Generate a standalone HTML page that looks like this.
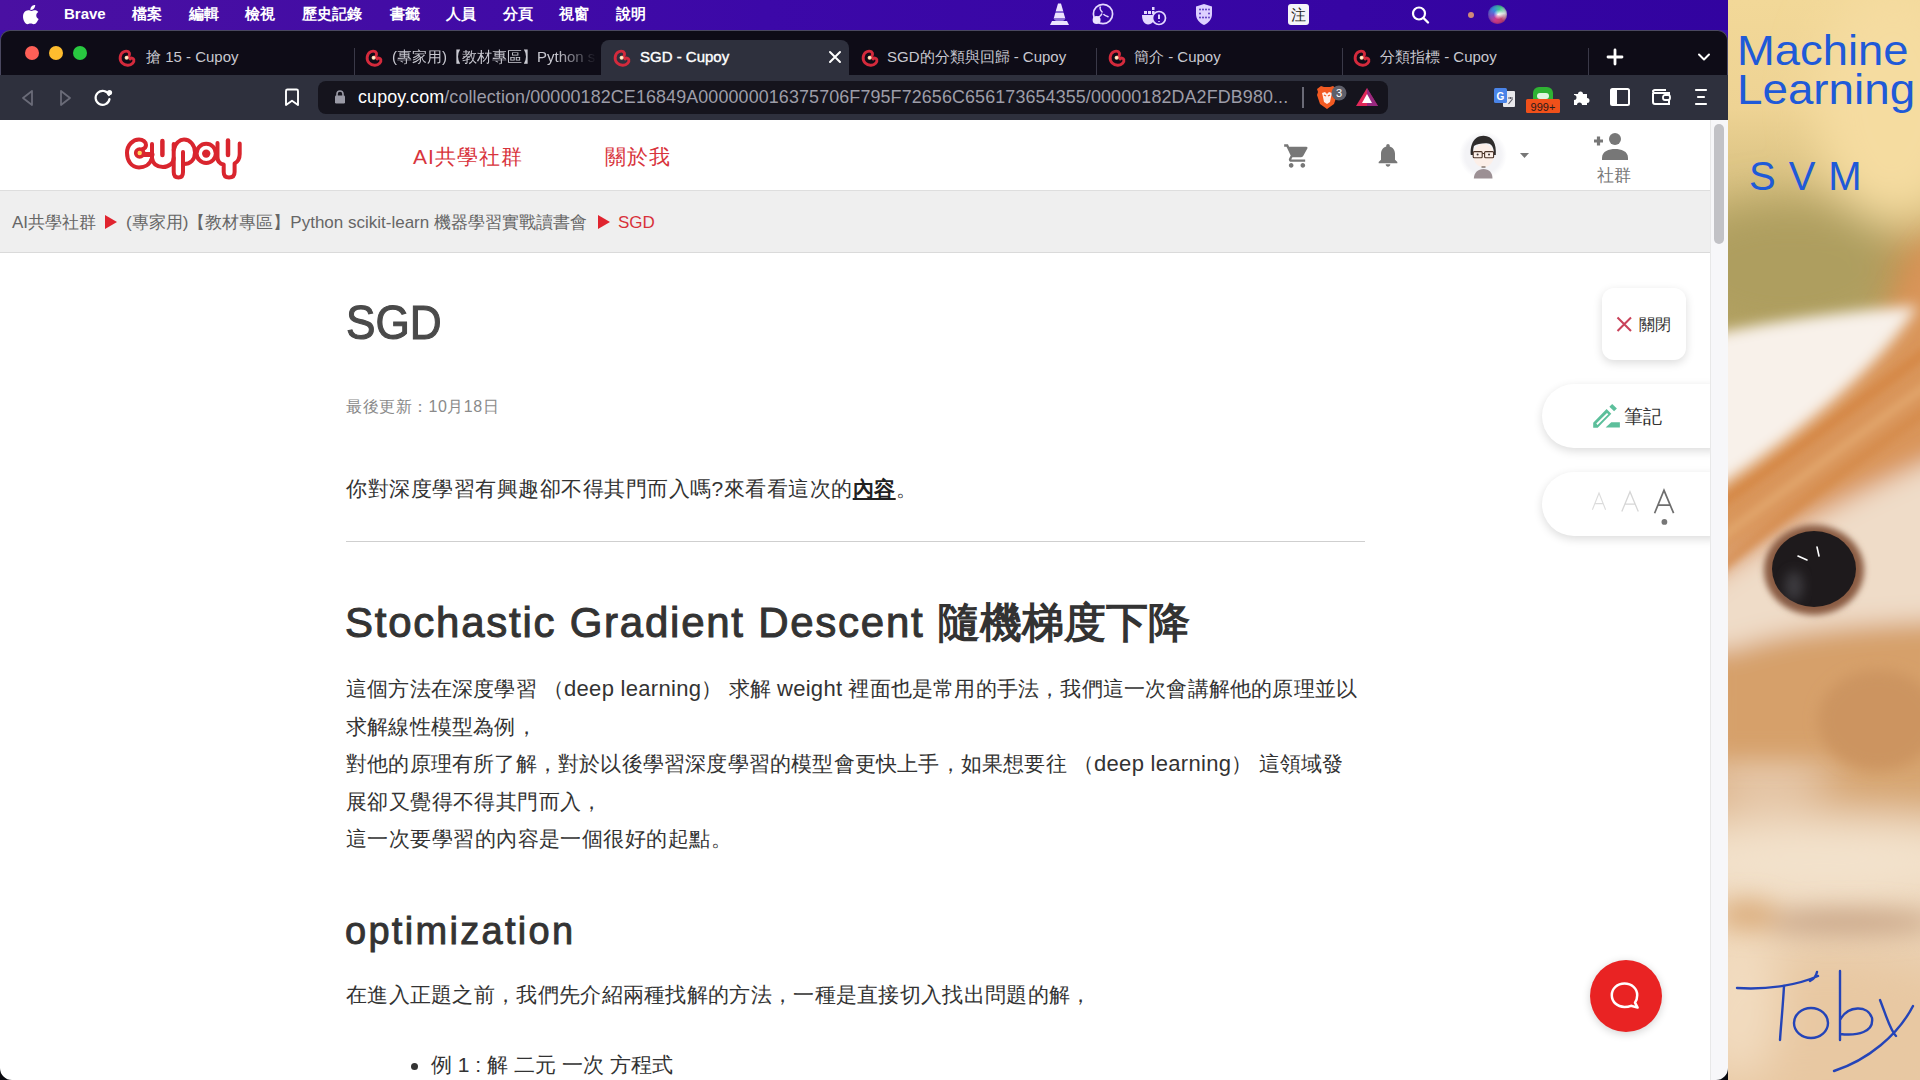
<!DOCTYPE html>
<html><head><meta charset="utf-8">
<style>
*{margin:0;padding:0;box-sizing:border-box}
html,body{width:1920px;height:1080px;overflow:hidden;background:#3a10b0;font-family:"Liberation Sans",sans-serif}
.a{position:absolute;white-space:nowrap}
#menubar{position:absolute;left:0;top:0;width:1920px;height:30px;background:linear-gradient(90deg,#4a10a2 0%,#3c08a8 40%,#30029e 100%)}
#menubar .m{position:absolute;top:5px;font-size:15px;color:#fff;font-weight:bold;line-height:18px}
#win{position:absolute;left:0;top:30px;width:1728px;height:1050px;background:#0e0c17;border-radius:10px 10px 0 0;overflow:hidden;border:1px solid #4a4860;border-bottom:none}
#tabs .t{position:absolute;top:48px;font-size:15px;color:#c8c8d0;line-height:18px}
#toolbar{position:absolute;left:0;top:75px;width:1728px;height:45px;background:#2e303d}
#url{position:absolute;left:318px;top:81px;width:1070px;height:33px;background:#15141d;border-radius:8px}
#page{position:absolute;left:0;top:120px;width:1728px;height:960px;background:#fff;overflow:hidden}
#right{position:absolute;left:1728px;top:0;width:192px;height:1080px;overflow:hidden}

#tabs .dot{position:absolute;top:46px;width:14px;height:14px;border-radius:50%}
#acttab{position:absolute;left:601px;top:40px;width:248px;height:40px;background:#2e303d;border-radius:8px 8px 0 0}
#tabs .sep{position:absolute;top:48px;width:1px;height:27px;background:#3a3948}
.favw{top:48px;width:20px;height:20px}
.fade{-webkit-mask-image:linear-gradient(90deg,#000 80%,transparent)}

#hdr{position:absolute;left:0;top:0;width:1710px;height:71px;background:#fff;border-bottom:1px solid #dedede}
.nav{top:24px;font-size:21px;line-height:26px;color:#d8343c;letter-spacing:1px}
#crumb{position:absolute;left:0;top:71px;width:1710px;height:62px;background:#efefef;border-bottom:1px solid #dadada}
.bc{top:92px;font-size:17px;line-height:22px;color:#666}
#sbar{position:absolute;left:1710px;top:0;width:18px;height:960px;background:#f7f7f9;border-left:1px solid #e8e8e8}
#sthumb{position:absolute;left:1714px;top:4px;width:10px;height:120px;border-radius:5px;background:#c2c2c6}
.p{font-size:21px;line-height:26px;color:#333}
.en{font-size:22px;letter-spacing:0.3px}
.card{background:#fff;box-shadow:0 3px 10px rgba(0,0,0,.14)}
</style></head><body>
<div id="menubar">
  <div class="m" style="left:64px">Brave</div>
  <div class="m" style="left:132px">檔案</div>
  <div class="m" style="left:189px">編輯</div>
  <div class="m" style="left:245px">檢視</div>
  <div class="m" style="left:302px">歷史記錄</div>
  <div class="m" style="left:390px">書籤</div>
  <div class="m" style="left:446px">人員</div>
  <div class="m" style="left:503px">分頁</div>
  <div class="m" style="left:559px">視窗</div>
  <div class="m" style="left:616px">說明</div>
</div>

<div id="mbicons">
  <svg class="a" style="left:23px;top:4px" width="18" height="21" viewBox="0 0 18 21"><path d="M12.2 1 C12.3 2.6 11.6 4 10.5 4.9 C9.5 5.8 8.4 6 7.4 5.9 C7.3 4.5 8 3 9 2.1 C10 1.3 11.2 1 12.2 1 Z M15.6 15 C15 16.3 14.6 17 13.9 18 C13 19.3 11.8 20.3 10.6 20.3 C9.4 20.3 9.1 19.6 7.6 19.6 C6.1 19.6 5.7 20.3 4.5 20.3 C3.3 20.3 2.2 19.1 1.4 17.8 C-0.5 14.8 -0.4 10.3 1.5 8.1 C2.5 6.9 3.9 6.2 5.2 6.2 C6.6 6.2 7.4 6.9 8.6 6.9 C9.7 6.9 10.4 6.2 12 6.2 C13.2 6.2 14.4 6.8 15.3 7.9 C12.3 9.5 12.8 13.9 15.6 15 Z" fill="#fff"/></svg>
  <svg class="a" style="left:1048px;top:2px" width="24" height="25" viewBox="0 0 24 25"><path d="M10 1.5 H13 L15.2 9 H7.8 Z" fill="#ece4ff"/><path d="M7.3 11 H15.7 L17.3 16.5 H5.7 Z" fill="#ece4ff"/><path d="M7.8 9 H15.2 L15.7 11 H7.3 Z" fill="#8a70d8"/><path d="M5.7 16.5 H17.3 C17 18.5 14.5 19.5 11.5 19.5 C8.5 19.5 6 18.5 5.7 16.5 Z" fill="#8a70d8"/><path d="M4 19 H19 L21 23 H2 Z" fill="#ece4ff"/></svg>
  <svg class="a" style="left:1091px;top:2px" width="24" height="25" viewBox="0 0 24 25"><circle cx="12" cy="12" r="9.6" fill="none" stroke="#e4d8ff" stroke-width="1.7"/><path d="M9.5 4.5 C8 7 10 9 11.5 10.5 M17.5 15 C15 13.5 13.5 14 12.5 12 M7 15.5 C9 14.5 10.5 13 11 11.5" fill="none" stroke="#e4d8ff" stroke-width="1.5"/><circle cx="5.6" cy="18" r="4" fill="#ece4ff"/></svg>
  <svg class="a" style="left:1140px;top:2px" width="28" height="25" viewBox="0 0 28 25"><path d="M2 13 H15 C15 19 12 22.5 8 22.5 C4.5 22.5 2 19 2 13 Z" fill="#e4d8ff"/><rect x="4" y="9" width="3" height="3" fill="#e4d8ff"/><rect x="8" y="9" width="3" height="3" fill="#e4d8ff"/><rect x="12" y="5" width="2.5" height="3" fill="#e4d8ff"/><rect x="12" y="9" width="2.5" height="3" fill="#e4d8ff"/><circle cx="19" cy="16" r="6.5" fill="#3a06a8" stroke="#e4d8ff" stroke-width="1.7"/><path d="M19 12.5 V17 M19 19 V19.8" stroke="#e4d8ff" stroke-width="1.9"/></svg>
  <svg class="a" style="left:1193px;top:3px" width="22" height="23" viewBox="0 0 22 23"><path d="M11 1 L19 3.5 V11 C19 16.5 15.5 20 11 22 C6.5 20 3 16.5 3 11 V3.5 Z" fill="#ddd0ff"/><g fill="#5a3ac0"><circle cx="7" cy="6.5" r="1"/><circle cx="10" cy="6.5" r="1"/><circle cx="13" cy="6.5" r="1"/><circle cx="16" cy="6.5" r="0.9"/><circle cx="7" cy="10.5" r="1"/><circle cx="16" cy="10.5" r="1"/><circle cx="7" cy="14.5" r="1"/><circle cx="10" cy="14.5" r="1"/><circle cx="13" cy="14.5" r="1"/><circle cx="16" cy="14.5" r="0.9"/></g></svg>
  <div class="a" style="left:1288px;top:4px;width:21px;height:21px;background:#f4f4f8;border-radius:3px;color:#222;font-size:15px;line-height:21px;text-align:center">注</div>
  <svg class="a" style="left:1410px;top:5px" width="22" height="20" viewBox="0 0 22 20"><circle cx="9" cy="8.5" r="6" fill="none" stroke="#fff" stroke-width="2.2"/><path d="M13.5 13 L18 17.5" stroke="#fff" stroke-width="2.4" stroke-linecap="round"/></svg>
  <div class="a" style="left:1468px;top:12px;width:6px;height:6px;border-radius:50%;background:#d08a78"></div>
  <div class="a" style="left:1488px;top:5px;width:19px;height:19px;border-radius:50%;background:radial-gradient(circle at 55% 50%,rgba(255,255,255,.9) 0%,rgba(255,255,255,0) 35%),conic-gradient(from 200deg,#d03a8a,#7a50c8,#3a8ae0,#40c890,#d8e0e0,#c04070,#d03a8a);box-shadow:inset 0 0 3px rgba(40,0,80,.6)"></div>
</div>
<div id="win"></div>

<div id="tabs">
  <div class="dot" style="left:25px;background:#fe5f57"></div>
  <div class="dot" style="left:49px;background:#febc2e"></div>
  <div class="dot" style="left:73px;background:#28c840"></div>
  <div id="acttab"></div>
  <div class="sep" style="left:354px"></div>
  <div class="sep" style="left:1096px"></div>
  <div class="sep" style="left:1342px"></div>
  <div class="sep" style="left:1588px"></div>
  <div class="a favw" style="left:117px"><svg class="fav" width="20" height="20" viewBox="0 0 20 20"><path d="M10.5 9.5 C12.5 8 13.5 5.5 11.5 3.8 C9 2.2 4 3.5 3.2 9 C2.6 14 6.5 17.5 11 17.3 C15 17 17.5 14 16.8 11.5 C16.2 9.8 14.2 9.6 13 11" fill="none" stroke="#d42a3c" stroke-width="2.9" stroke-linecap="round"/><circle cx="9.6" cy="9.8" r="2" fill="#ffd8a8"/><circle cx="9.6" cy="9.8" r="1" fill="#fff4e0"/></svg></div>
  <div class="a t" style="left:146px">搶 15 - Cupoy</div>
  <div class="a favw" style="left:364px"><svg class="fav" width="20" height="20" viewBox="0 0 20 20"><path d="M10.5 9.5 C12.5 8 13.5 5.5 11.5 3.8 C9 2.2 4 3.5 3.2 9 C2.6 14 6.5 17.5 11 17.3 C15 17 17.5 14 16.8 11.5 C16.2 9.8 14.2 9.6 13 11" fill="none" stroke="#d42a3c" stroke-width="2.9" stroke-linecap="round"/><circle cx="9.6" cy="9.8" r="2" fill="#ffd8a8"/><circle cx="9.6" cy="9.8" r="1" fill="#fff4e0"/></svg></div>
  <div class="a t fade" style="left:392px;width:205px;overflow:hidden">(專家用)【教材專區】Python scikit</div>
  <div class="a favw" style="left:612px"><svg class="fav" width="20" height="20" viewBox="0 0 20 20"><path d="M10.5 9.5 C12.5 8 13.5 5.5 11.5 3.8 C9 2.2 4 3.5 3.2 9 C2.6 14 6.5 17.5 11 17.3 C15 17 17.5 14 16.8 11.5 C16.2 9.8 14.2 9.6 13 11" fill="none" stroke="#d42a3c" stroke-width="2.9" stroke-linecap="round"/><circle cx="9.6" cy="9.8" r="2" fill="#ffd8a8"/><circle cx="9.6" cy="9.8" r="1" fill="#fff4e0"/></svg></div>
  <div class="a t" style="left:640px;color:#fff;-webkit-text-stroke:0.4px #fff">SGD - Cupoy</div>
  <div class="a" style="left:827px;top:47px;width:16px;height:20px"><svg width="16" height="20" viewBox="0 0 16 20"><path d="M3 5 L13 15 M13 5 L3 15" stroke="#fff" stroke-width="2" stroke-linecap="round"/></svg></div>
  <div class="a favw" style="left:860px"><svg class="fav" width="20" height="20" viewBox="0 0 20 20"><path d="M10.5 9.5 C12.5 8 13.5 5.5 11.5 3.8 C9 2.2 4 3.5 3.2 9 C2.6 14 6.5 17.5 11 17.3 C15 17 17.5 14 16.8 11.5 C16.2 9.8 14.2 9.6 13 11" fill="none" stroke="#d42a3c" stroke-width="2.9" stroke-linecap="round"/><circle cx="9.6" cy="9.8" r="2" fill="#ffd8a8"/><circle cx="9.6" cy="9.8" r="1" fill="#fff4e0"/></svg></div>
  <div class="a t" style="left:887px">SGD的分類與回歸 - Cupoy</div>
  <div class="a favw" style="left:1107px"><svg class="fav" width="20" height="20" viewBox="0 0 20 20"><path d="M10.5 9.5 C12.5 8 13.5 5.5 11.5 3.8 C9 2.2 4 3.5 3.2 9 C2.6 14 6.5 17.5 11 17.3 C15 17 17.5 14 16.8 11.5 C16.2 9.8 14.2 9.6 13 11" fill="none" stroke="#d42a3c" stroke-width="2.9" stroke-linecap="round"/><circle cx="9.6" cy="9.8" r="2" fill="#ffd8a8"/><circle cx="9.6" cy="9.8" r="1" fill="#fff4e0"/></svg></div>
  <div class="a t" style="left:1134px">簡介 - Cupoy</div>
  <div class="a favw" style="left:1352px"><svg class="fav" width="20" height="20" viewBox="0 0 20 20"><path d="M10.5 9.5 C12.5 8 13.5 5.5 11.5 3.8 C9 2.2 4 3.5 3.2 9 C2.6 14 6.5 17.5 11 17.3 C15 17 17.5 14 16.8 11.5 C16.2 9.8 14.2 9.6 13 11" fill="none" stroke="#d42a3c" stroke-width="2.9" stroke-linecap="round"/><circle cx="9.6" cy="9.8" r="2" fill="#ffd8a8"/><circle cx="9.6" cy="9.8" r="1" fill="#fff4e0"/></svg></div>
  <div class="a t" style="left:1380px">分類指標 - Cupoy</div>
  <div class="a" style="left:1605px;top:47px"><svg width="20" height="20" viewBox="0 0 20 20"><path d="M10 3 V17 M3 10 H17" stroke="#fff" stroke-width="2.8" stroke-linecap="round"/></svg></div>
  <div class="a" style="left:1696px;top:50px"><svg width="16" height="14" viewBox="0 0 16 14"><path d="M3 4.5 L8 9.5 L13 4.5" fill="none" stroke="#fff" stroke-width="2" stroke-linecap="round" stroke-linejoin="round"/></svg></div>
</div>
<div id="toolbar"></div>
<div id="url"></div>

<div id="tbicons">
  <svg class="a" style="left:17px;top:87px" width="22" height="22" viewBox="0 0 22 22"><path d="M15 4 L6 11 L15 18 Z" fill="none" stroke="#6a6b78" stroke-width="1.8" stroke-linejoin="round"/></svg>
  <svg class="a" style="left:54px;top:87px" width="22" height="22" viewBox="0 0 22 22"><path d="M7 4 L16 11 L7 18 Z" fill="none" stroke="#6a6b78" stroke-width="1.8" stroke-linejoin="round"/></svg>
  <svg class="a" style="left:92px;top:86px" width="22" height="22" viewBox="0 0 22 22"><path d="M17 9 A7 7 0 1 0 17.5 13" fill="none" stroke="#fff" stroke-width="2.2" stroke-linecap="round"/><circle cx="17.5" cy="6.5" r="2.6" fill="#fff"/></svg>
  <svg class="a" style="left:281px;top:86px" width="22" height="22" viewBox="0 0 22 22"><path d="M6.5 3.5 H15.5 A1.5 1.5 0 0 1 17 5 V19 L11 14.8 L5 19 V5 A1.5 1.5 0 0 1 6.5 3.5 Z" fill="none" stroke="#fff" stroke-width="1.9" stroke-linejoin="round"/></svg>
  <svg class="a" style="left:333px;top:89px" width="14" height="16" viewBox="0 0 14 16"><path d="M4 7 V5 A3 3 0 0 1 10 5 V7" fill="none" stroke="#9a9aa6" stroke-width="1.6"/><rect x="2" y="6.5" width="10" height="8" rx="1.2" fill="#9a9aa6"/></svg>
  <div class="a" style="left:358px;top:86px;font-size:17.9px;line-height:22px;color:#fff;letter-spacing:0.12px">cupoy.com<span style="color:#9d9da8">/collection/00000182CE16849A000000016375706F795F72656C656173654355/00000182DA2FDB980...</span></div>
  <div class="a" style="left:1302px;top:87px;width:1.5px;height:21px;background:#6a6a76"></div>
  <svg class="a" style="left:1314px;top:84px" width="40" height="28" viewBox="0 0 40 28"><path d="M4 8 L3 5 L7 2 L10 3 H16 L19 2 L23 5 L22 8 L23 11 L20 20 L13 25 L6 20 L3 11 Z" fill="#f25a22"/><path d="M8 9 L11 8 L13 10 L15 8 L18 9 L17 13 L16 18 L13 20 L10 18 L9 13 Z" fill="#fff" opacity=".9"/><path d="M10 11 L12 12 M16 11 L14 12" stroke="#f25a22" stroke-width="1.2"/><circle cx="25" cy="9" r="7.5" fill="#5e5f6a"/><text x="25" y="13" font-size="11" fill="#fff" text-anchor="middle" font-family="Liberation Sans">3</text></svg>
  <svg class="a" style="left:1354px;top:86px" width="26" height="22" viewBox="0 0 26 22"><path d="M13 2 L24 20 H2 Z" fill="#e0285a"/><path d="M13 2 L24 20 H13 Z" fill="#7a2a90" opacity=".7"/><path d="M13 8 L18 17 H8 Z" fill="#fff"/></svg>
  <svg class="a" style="left:1493px;top:86px" width="24" height="24" viewBox="0 0 24 24"><rect x="10" y="5" width="12" height="16" rx="1" fill="#e8e8ec"/><rect x="1" y="2" width="13" height="15" rx="1.5" fill="#4a84e8"/><text x="7.5" y="13.5" font-size="10" font-weight="bold" fill="#fff" text-anchor="middle" font-family="Liberation Sans">G</text><path d="M15 12 L20 12 M17.5 11 V13 M15.5 18 L19.5 13" stroke="#5a5a66" stroke-width="1.2"/></svg>
  <svg class="a" style="left:1525px;top:85px" width="36" height="30" viewBox="0 0 36 30"><rect x="8" y="2" width="20" height="18" rx="6" fill="#2fb233"/><rect x="12" y="8" width="12" height="6" rx="3" fill="#fff" opacity=".85"/><rect x="1" y="14" width="34" height="14" rx="1.5" fill="#f0501a"/><text x="18" y="25.5" font-size="11" fill="#2a1a1a" text-anchor="middle" font-family="Liberation Sans">999+</text></svg>
  <svg class="a" style="left:1571px;top:87px" width="20" height="20" viewBox="0 0 20 20"><path d="M3 7 H7 A2.5 2.5 0 1 1 12 7 H16 V11 A2.5 2.5 0 1 1 16 16 V18 H11 A2.5 2.5 0 1 0 6 18 H3 V13 A2.5 2.5 0 1 0 3 8 Z" fill="#fff"/></svg>
  <svg class="a" style="left:1609px;top:87px" width="22" height="20" viewBox="0 0 22 20"><rect x="2" y="2" width="18" height="16" rx="1.5" fill="none" stroke="#fff" stroke-width="2"/><rect x="2" y="2" width="6" height="16" fill="#fff"/></svg>
  <svg class="a" style="left:1650px;top:87px" width="22" height="20" viewBox="0 0 22 20"><path d="M3 6 V15 A2 2 0 0 0 5 17 H19 V12 M19 9 V6 H5 A2 2 0 0 1 3 4 A2 2 0 0 1 5 3 H16" fill="none" stroke="#fff" stroke-width="2"/><rect x="13" y="8" width="7" height="5" rx="2" fill="none" stroke="#fff" stroke-width="1.8"/></svg>
  <svg class="a" style="left:1692px;top:87px" width="18" height="20" viewBox="0 0 18 20"><path d="M4 3 H14 M6 10 H12 M4 17 H14" stroke="#fff" stroke-width="2.2" stroke-linecap="round"/></svg>
</div>

<div id="page">
  <div id="hdr"></div>
  <svg class="a" style="left:120px;top:8px" width="125" height="55" viewBox="120 128 125 55">
    <g fill="none" stroke="#d9252e" stroke-width="4" stroke-linecap="round" stroke-linejoin="round">
      <path d="M152 144 L152 158 C150 165 144 167.5 139 167.5 C131 167.5 127 160 127 153 C127 145 133 139.5 139 139.5 C143 139.5 146 142 146 145 C146 148 143.5 149 142 149.5"/>
      <circle cx="139.7" cy="153" r="3.8"/>
      <path d="M143 154.5 L152 154.5" stroke-width="5"/>
      <path d="M152 158 C153 165 158 167 163 167 C169 167 173.7 163 173.7 158"/>
      <path d="M162.4 141 L162.4 155" stroke-width="4.5"/>
      <path d="M173.7 144 L173.7 172 C173.7 176 176 177.5 178.5 177.5 C181 177.5 183 176 183 172 L183 164"/>
      <path d="M173.7 150 C175 143 180 139.5 184 139.5 C190 139.5 195 145 195 152.5 C195 160 190 164 184 164"/>
      <path d="M183 152 L183 165"/>
      <circle cx="206.2" cy="153.4" r="9.6"/>
      <path d="M217.5 143 L217.5 157 C217.5 162.5 220.5 164 223.7 164.5 L223.7 172 C223.7 176 226 177.5 229 177.5 C232 177.5 234.6 176 234.6 172 L234.6 163.5 C238 161.5 239.7 158 239.7 154 L239.7 143.5"/>
      <path d="M228 140.5 L228 155" stroke-width="4.5"/>
    </g>
    <circle cx="206.2" cy="153.6" r="4.2" fill="#d9252e"/>
    <circle cx="139.7" cy="153" r="2.2" fill="#ffd65a"/>
  </svg>
  <div class="a nav" style="left:413px">AI共學社群</div>
  <div class="a nav" style="left:605px">關於我</div>
  <svg class="a" style="left:1283px;top:22px" width="28" height="28" viewBox="0 0 24 24"><path d="M7 18c-1.1 0-2 .9-2 2s.9 2 2 2 2-.9 2-2-.9-2-2-2zM1 2v2h2l3.6 7.59-1.35 2.45c-.16.28-.25.61-.25.96 0 1.1.9 2 2 2h12v-2H7.42c-.14 0-.25-.11-.25-.25l.03-.12.9-1.63h7.45c.75 0 1.41-.41 1.75-1.03l3.58-6.49A1 1 0 0 0 20 4H5.21l-.94-2H1zm16 16c-1.1 0-2 .9-2 2s.9 2 2 2 2-.9 2-2-.9-2-2-2z" fill="#777"/></svg>
  <svg class="a" style="left:1374px;top:20px" width="28" height="30" viewBox="0 0 24 24"><path d="M12 22c1.1 0 2-.9 2-2h-4c0 1.1.9 2 2 2zm6-6v-5c0-3.07-1.63-5.64-4.5-6.32V4c0-.83-.67-1.5-1.5-1.5s-1.5.67-1.5 1.5v.68C7.64 5.36 6 7.92 6 11v5l-2 2v1h16v-1l-2-2z" fill="#777"/></svg>
  <div class="a" style="left:1459px;top:11px;width:48px;height:48px">
    <svg width="48" height="48" viewBox="0 0 48 48"><defs><radialGradient id="avbg"><stop offset="0.75" stop-color="#f3f3f6"/><stop offset="1" stop-color="#fff"/></radialGradient></defs><circle cx="24" cy="24" r="24" fill="url(#avbg)"/>
    <ellipse cx="24.5" cy="24.5" rx="10.5" ry="11.5" fill="#fcefe8"/>
    <path d="M11.8 24 C11 15 14 5 24.5 4.8 C34 5 37.5 13 36.8 24 L35 24 C35 17 33 13 29 12.5 C24 12 18 13 15 15 C14 18 14 21 14 24 Z" fill="#2e2c2c"/>
    <rect x="14.2" y="20.6" width="9" height="6.2" rx="1" fill="none" stroke="#4a3428" stroke-width="1.1"/><rect x="25.6" y="20.6" width="9" height="6.2" rx="1" fill="none" stroke="#4a3428" stroke-width="1.1"/><path d="M23.2 22.5 H25.6" stroke="#4a3428" stroke-width="1"/>
    <circle cx="18.6" cy="23.6" r="1" fill="#3a3030"/><circle cx="30" cy="23.6" r="1" fill="#3a3030"/>
    <path d="M22.5 36 H26.5" stroke="#6a5a52" stroke-width="1.2"/>
    <path d="M14.8 47.6 C15 41.5 19 38 24.5 38 C30 38 33.5 41.5 33.5 47.6 Z" fill="#9c9094"/></svg>
  </div>
  <svg class="a" style="left:1519px;top:32px" width="12" height="8" viewBox="0 0 12 8"><path d="M1 1 H10 L5.5 6 Z" fill="#777"/></svg>
  <svg class="a" style="left:1592px;top:10px" width="40" height="32" viewBox="0 0 40 32"><path d="M2 11 H11 M6.5 6.5 V15.5" stroke="#777" stroke-width="3.2"/><circle cx="23" cy="9" r="6" fill="#777"/><path d="M10 28 C10 21 17 19 23 19 C29 19 36 21 36 28 V30 H10 Z" fill="#777"/></svg>
  <div class="a" style="left:1597px;top:46px;font-size:17px;color:#777;line-height:20px">社群</div>
  <div id="crumb"></div>
  <div class="a bc" style="left:12px">AI共學社群</div>
  <svg class="a" style="left:104px;top:94px" width="14" height="16" viewBox="0 0 14 16"><path d="M1 1 L13 8 L1 15 Z" fill="#e0242f"/></svg>
  <div class="a bc" style="left:126px">(專家用)【教材專區】Python scikit-learn 機器學習實戰讀書會</div>
  <svg class="a" style="left:597px;top:94px" width="14" height="16" viewBox="0 0 14 16"><path d="M1 1 L13 8 L1 15 Z" fill="#e0242f"/></svg>
  <div class="a bc" style="left:618px;color:#d8323a">SGD</div>
  
  <div class="a" style="left:346px;top:175px;font-size:48px;line-height:56px;color:#4a4a4a;-webkit-text-stroke:1.1px #4a4a4a;transform:scaleX(0.92);transform-origin:0 0">SGD</div>
  <div class="a" style="left:346px;top:277px;font-size:16px;line-height:20px;color:#8a8a8a;letter-spacing:0.5px">最後更新：10月18日</div>
  <div class="a p" style="left:346px;top:356px;letter-spacing:0.5px">你對深度學習有興趣卻不得其門而入嗎?來看看這次的<span style="text-decoration:underline;font-weight:bold;color:#222">內容</span>。</div>
  <div class="a" style="left:346px;top:421px;width:1019px;height:1px;background:#cfcfcf"></div>
  <div class="a" style="left:345px;top:477px;font-size:42px;line-height:52px;color:#333;font-weight:bold"><span style="font-weight:normal;-webkit-text-stroke:1px #333;letter-spacing:1.75px">Stochastic Gradient Descent </span>隨機梯度下降</div>
  <div class="a p" style="left:346px;top:556px;letter-spacing:0.2px">這個方法在深度學習 （<span class="en">deep learning</span>） 求解 <span class="en">weight</span> 裡面也是常用的手法，我們這一次會講解他的原理並以</div>
  <div class="a p" style="left:346px;top:593.5px;letter-spacing:0.2px">求解線性模型為例，</div>
  <div class="a p" style="left:346px;top:631px;letter-spacing:0.2px">對他的原理有所了解，對於以後學習深度學習的模型會更快上手，如果想要往 （<span class="en">deep learning</span>） 這領域發</div>
  <div class="a p" style="left:346px;top:668.5px;letter-spacing:0.4px">展卻又覺得不得其門而入，</div>
  <div class="a p" style="left:346px;top:706px;letter-spacing:0.45px">這一次要學習的內容是一個很好的起點。</div>
  <div class="a" style="left:345px;top:786px;font-size:38px;line-height:50px;color:#333;-webkit-text-stroke:0.9px #333;letter-spacing:2.3px">optimization</div>
  <div class="a p" style="left:346px;top:862px;letter-spacing:0.3px">在進入正題之前，我們先介紹兩種找解的方法，一種是直接切入找出問題的解，</div>
  <div class="a" style="left:411px;top:943px;width:7px;height:7px;border-radius:50%;background:#333"></div>
  <div class="a p" style="left:431px;top:932px">例 1 : 解 二元 一次 方程式</div>

  <div class="a card" style="left:1602px;top:168px;width:84px;height:72px;border-radius:12px"></div>
  <svg class="a" style="left:1615px;top:195px" width="18" height="18" viewBox="0 0 18 18"><path d="M2.5 2.5 L16 16 M16 2.5 L2.5 16" stroke="#c9425a" stroke-width="2.1"/></svg>
  <div class="a" style="left:1639px;top:195px;font-size:16px;line-height:20px;color:#333">關閉</div>
  <div class="a card" style="left:1542px;top:264px;width:200px;height:64px;border-radius:32px"></div>
  <svg class="a" style="left:1592px;top:283px" width="30" height="26" viewBox="0 0 30 26"><path d="M1.2 19.7 L14.6 6.1 L19.3 10.75 L5.7 24.8 H1.2 Z M4.3 20.6 L15 10 L16.3 11.3 L5.5 22 Z" fill="#5cbf9b" fill-rule="evenodd"/><path d="M17.4 3.7 L20.2 1.1 L24.9 5.4 L22.1 8.2 Z" fill="#5cbf9b"/><path d="M13.6 24.6 L19.25 19.2 H27.9 V24.6 Z" fill="#5cbf9b"/></svg>
  <div class="a" style="left:1624px;top:285px;font-size:19px;line-height:24px;color:#333">筆記</div>
  <div class="a card" style="left:1542px;top:352px;width:200px;height:64px;border-radius:32px"></div>
  <svg class="a" style="left:1585px;top:368px" width="95" height="40" viewBox="1585 488 95 40" fill="none" stroke-linejoin="miter">
    <path d="M1592.4 509.7 L1599 493 L1605.6 509.7 M1594.6 503.6 H1603.4" stroke="#dcdcdc" stroke-width="1.1"/>
    <path d="M1621.8 511.6 L1630 491.8 L1638.3 511.6 M1624.6 504.2 H1635.4" stroke="#d6d6d6" stroke-width="1.3"/>
    <path d="M1654.6 513.2 L1664 490.3 L1673.6 513.2 M1657.8 505.2 H1670.4" stroke="#6e6e6e" stroke-width="1.7"/>
    <circle cx="1664.4" cy="521.9" r="2.9" fill="#777" stroke="none"/>
  </svg>
  <div class="a" style="left:1590px;top:840px;width:72px;height:72px;border-radius:50%;background:#e92323;box-shadow:0 2px 8px rgba(0,0,0,.18)"></div>
  <div id="sbar"></div><div id="sthumb"></div>
  <svg class="a" style="left:1608px;top:858px" width="36" height="36" viewBox="0 0 36 36"><path d="M23 27.8 C21 28.6 19 28.9 16.5 28.9 C9.2 28.9 3.8 23.8 3.8 17.2 C3.8 10.6 9.2 5.6 16.5 5.6 C23.8 5.6 29.2 10.6 29.2 17.2 C29.2 20.2 28.4 22.6 27 24.6 L29.6 29.6 Z" fill="none" stroke="#fff" stroke-width="2.5" stroke-linejoin="round"/></svg>
</div>

<svg class="a" style="left:0;top:1068px" width="12" height="12" viewBox="0 0 12 12"><path d="M0 0 A12 12 0 0 0 12 12 H0 Z" fill="#0a0a10"/></svg>
<svg class="a" style="left:1716px;top:1068px" width="12" height="12" viewBox="0 0 12 12"><path d="M12 0 A12 12 0 0 1 0 12 H12 Z" fill="#0a0a10"/></svg>
<div id="right">
<svg width="192" height="1080" viewBox="0 0 192 1080">
  <defs>
    <filter id="b20" x="-50%" y="-50%" width="200%" height="200%"><feGaussianBlur stdDeviation="22"/></filter>
    <filter id="b14" x="-50%" y="-50%" width="200%" height="200%"><feGaussianBlur stdDeviation="12"/></filter>
    <filter id="b8" x="-50%" y="-50%" width="200%" height="200%"><feGaussianBlur stdDeviation="7"/></filter>
    <filter id="b4" x="-50%" y="-50%" width="200%" height="200%"><feGaussianBlur stdDeviation="5"/></filter>
    <filter id="b6" x="-50%" y="-50%" width="200%" height="200%"><feGaussianBlur stdDeviation="6"/></filter>
    <filter id="b3" x="-50%" y="-50%" width="200%" height="200%"><feGaussianBlur stdDeviation="3"/></filter>
    <linearGradient id="bg" x1="0" y1="0" x2="0" y2="1">
      <stop offset="0" stop-color="#f2d898"/><stop offset="0.1" stop-color="#eed394"/><stop offset="0.22" stop-color="#c9b475"/><stop offset="0.3" stop-color="#b8a565"/><stop offset="0.34" stop-color="#e0b888"/><stop offset="0.6" stop-color="#d8a874"/><stop offset="0.8" stop-color="#ecd6bc"/><stop offset="1" stop-color="#e8c8a2"/>
    </linearGradient>
  </defs>
  <rect width="192" height="1080" fill="url(#bg)"/>
  <g filter="url(#b20)">
    <ellipse cx="165" cy="100" rx="80" ry="120" fill="#f5dca0"/>
    <ellipse cx="60" cy="270" rx="120" ry="70" fill="#ae9e5e"/>
    <ellipse cx="200" cy="300" rx="30" ry="70" fill="#d88a48"/>
    <path d="M-40 615 L240 600 L240 810 L-40 810 Z" fill="#d6a470"/>
    <ellipse cx="40" cy="760" rx="60" ry="60" fill="#e4c4a4"/>
    <ellipse cx="100" cy="860" rx="150" ry="40" fill="#f3e2cc"/>
    <ellipse cx="100" cy="1030" rx="160" ry="70" fill="#e8c8a2"/>
    <ellipse cx="10" cy="1000" rx="40" ry="80" fill="#f2dcc0"/>
  </g>
  <g filter="url(#b14)">
    <path d="M155 330 C175 290 195 250 220 230 L220 660 L-20 660 L-20 480 Z" fill="#d9955a"/>
    <path d="M-30 590 C40 540 130 490 230 450 L230 640 C150 650 60 650 -30 650 Z" fill="#efdcc8"/>
    <path d="M-20 660 C40 630 120 625 220 620 L220 760 L-20 760 Z" fill="#d6a06a"/>
    <ellipse cx="120" cy="922" rx="90" ry="13" fill="#cba88a"/>
    <ellipse cx="20" cy="915" rx="30" ry="15" fill="#dcae7e"/>
  </g>
  <g filter="url(#b4)" fill="none">
    <path d="M200 350 C150 390 80 440 -10 505" stroke="#d4843f" stroke-width="8"/>
    <path d="M200 385 C150 420 90 465 -10 540" stroke="#e8b27a" stroke-width="5"/>
    <path d="M200 410 C150 445 80 495 -10 570" stroke="#d48846" stroke-width="7"/>
  </g>
  <g filter="url(#b8)">
    <path d="M-30 338 C30 324 100 312 190 306 C165 345 110 410 -30 500 Z" fill="#f8f1ea"/>
    <ellipse cx="150" cy="720" rx="60" ry="50" fill="#cc9460"/>
  </g>
  <g filter="url(#b3)">
    <ellipse cx="86" cy="570" rx="50" ry="45" fill="#8a5c42"/>
  </g>
  <ellipse cx="86" cy="569" rx="42" ry="38" fill="#1e1a1c"/>
  <ellipse cx="66" cy="586" rx="9" ry="15" fill="#58585f" opacity=".55" filter="url(#b6)"/>
  <path d="M70 556 L79 560 M89 547 L91 556" stroke="#fff" stroke-width="1.6" stroke-linecap="round"/>
  <text x="0" y="65" transform="translate(9,0) scale(1.08,1)" font-family="Liberation Sans" font-size="42" fill="#1f5ad8">Machine</text>
  <text x="0" y="104" transform="translate(9,0) scale(1.09,1)" font-family="Liberation Sans" font-size="42" fill="#1f5ad8">Learning</text>
  <text x="21" y="190" font-family="Liberation Sans" font-size="40" fill="#1f5ad8" letter-spacing="13">SVM</text>
  <g fill="none" stroke="#2444b8" stroke-width="2.4" stroke-linecap="round">
    <path d="M9 988 C40 990 70 985 90 976 M89 972 C88 977 86 979 82 981"/>
    <path d="M56 986 C55 1005 53 1025 52 1040"/>
    <ellipse cx="83" cy="1023" rx="17" ry="15"/>
    <path d="M112 971 V1040 M112 1020 C120 1005 140 1005 144 1018 C146 1032 130 1036 112 1034"/>
    <path d="M152 1000 C158 1015 162 1030 168 1036 M185 1006 C170 1035 140 1060 106 1071"/>
  </g>
</svg>
</div>
</body></html>
